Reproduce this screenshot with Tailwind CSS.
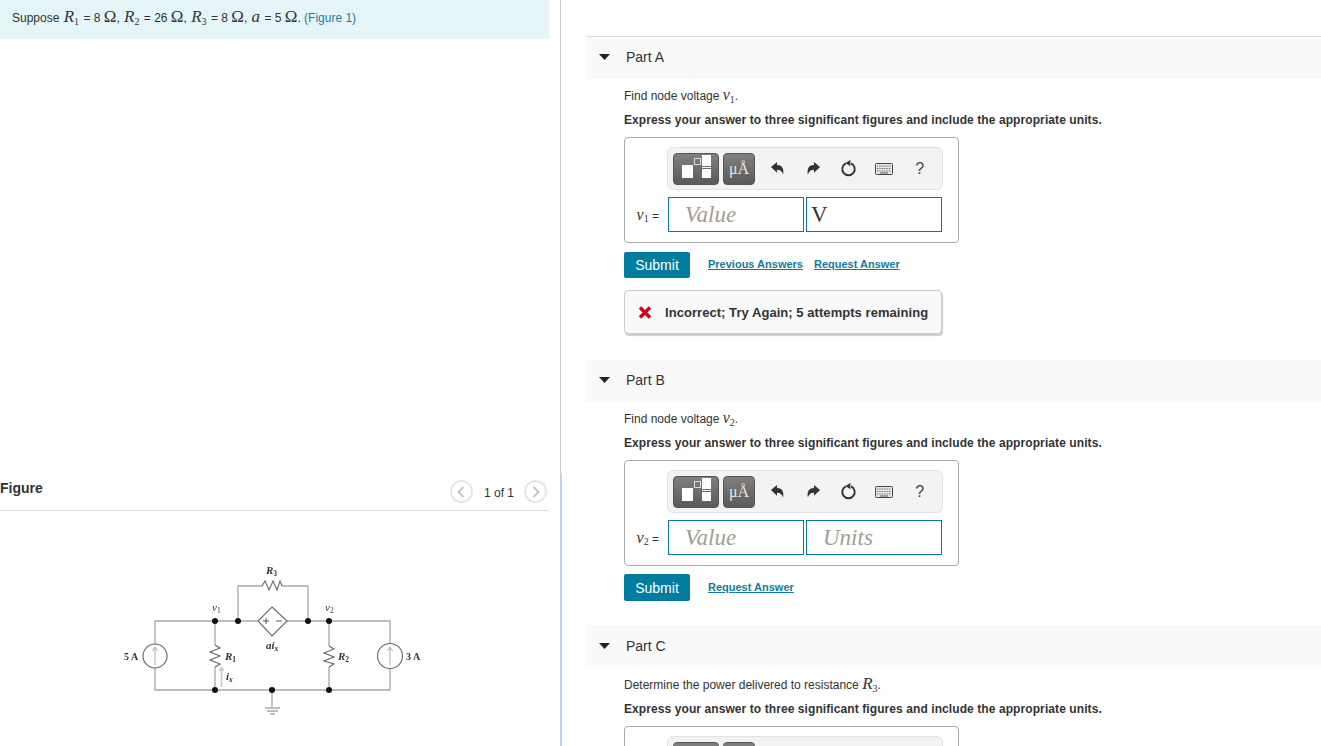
<!DOCTYPE html>
<html lang="en">
<head>
    <meta charset="UTF-8">
    <meta name="viewport" content="width=device-width, initial-scale=1.0">
    <title>Node voltages</title>
    <script src="https://cdn.jsdelivr.net/npm/@tailwindcss/browser@4"></script>
</head>
<body class="bg-white font-['Liberation_Sans',sans-serif] text-[#333]">
    <!-- shared toolbar icons -->
    <svg class="hidden">
        <symbol id="undo" viewBox="0 0 16 16"><path d="M1 6.500 7.500 1v3.300c4.800 0 7.800 3.200 6.500 10.200-1-3.700-3-5.300-6.500-5.300V12.500Z" fill="#333"/></symbol>
        <symbol id="redo" viewBox="0 0 16 16"><path d="M15 6.500 8.500 1v3.300C3.700 4.300.7 7.500 2 14.500c1-3.700 3-5.300 6.500-5.300V12.500Z" fill="#333"/></symbol>
        <symbol id="refresh" viewBox="0 0 18 18"><path d="M11.800 3.600a6.600 6.600 0 1 1-5.600 0" fill="none" stroke="#333" stroke-width="2"/><path d="M11 0v6.500L5.800 3.300Z" fill="#333"/></symbol>
        <symbol id="keyboard" viewBox="0 0 18 12"><rect x=".5" y=".5" width="17" height="11" rx="1" fill="#e8e8e8" stroke="#444"/><path d="M2 3h14M2 5.500h14M2 8h14" stroke="#666" stroke-width="1.200" stroke-dasharray="1 .7"/><path d="M5 10h8" stroke="#555"/></symbol>
    </svg>

    <div class="flex h-[746px] w-[1321px] overflow-hidden">
        <!-- Left pane -->
        <div class="w-[549px] shrink-0">
            <div class="flex h-[39px] items-center bg-[#e5f5f7] pb-1 pl-3 text-xs">
                <span>Suppose <i class="mx-px font-['Liberation_Serif'] text-[17px]">R<sub class="not-italic text-[10px]">1</sub></i> = 8 <span class="font-['Liberation_Serif'] text-[17px]">Ω</span>, <i class="mx-px font-['Liberation_Serif'] text-[17px]">R<sub class="not-italic text-[10px]">2</sub></i> = 26 <span class="font-['Liberation_Serif'] text-[17px]">Ω</span>, <i class="mx-px font-['Liberation_Serif'] text-[17px]">R<sub class="not-italic text-[10px]">3</sub></i> = 8 <span class="font-['Liberation_Serif'] text-[17px]">Ω</span>, <i class="mx-px font-['Liberation_Serif'] text-[17px]">a</i> = 5 <span class="font-['Liberation_Serif'] text-[17px]">Ω</span>. <a href="#" class="text-[#1a7f9c]">(Figure 1)</a></span>
            </div>

            <div class="mt-[439px] flex h-[33px] w-[548px] items-center justify-between border-b border-[#ddd] pb-[5px]">
                <h3 class="-mt-[7px] text-sm font-bold">Figure</h3>
                <div class="flex items-center">
                    <span class="flex h-[23px] w-[23px] items-center justify-center rounded-full border-2 border-[#e6e6e6]">
                        <svg width="8" height="12" viewBox="0 0 8 12"><path d="M6.500 1 1.500 6l5 5" fill="none" stroke="#c4c4c4" stroke-width="2"/></svg>
                    </span>
                    <span class="ml-[11px] mr-[10px] mt-[3px] text-xs">1 of 1</span>
                    <span class="mr-px flex h-[23px] w-[23px] items-center justify-center rounded-full border-2 border-[#e6e6e6]">
                        <svg width="8" height="12" viewBox="0 0 8 12"><path d="M1.500 1 6.500 6l-5 5" fill="none" stroke="#c4c4c4" stroke-width="2"/></svg>
                    </span>
                </div>
            </div>

            <!-- circuit, coordinates match the page so y starts at 511 -->
            <svg class="block blur-[0.4px]" width="549" height="235" viewBox="0 511 549 235" font-family="Liberation Serif" fill="#333">
                <g fill="none" stroke="#a8a8a8" stroke-width="1.300">
                    <path d="M258 621H155V644M155 668V690H390V669M390 644V621H287"/>
                    <path d="M215 621V645M215 667V690M329 621V646M329 667V690"/>
                    <path d="M238 621V586H262M282 586H308V621"/>
                    <path d="M272 690V707"/>
                    <path d="M265 708H280M267 711H278M270 714H275"/>
                </g>
                <g fill="none" stroke="#666" stroke-width="1.100">
                    <circle cx="155" cy="656" r="12"/>
                    <circle cx="390" cy="656" r="12.500"/>
                    <path d="M272 607 287 621 272 636 258 621Z"/>
                    <path d="M215 645 220 648 210 652 220 656 210 660 220 664 215 667"/>
                    <path d="M329 646 334 649 324 653 334 657 324 661 334 664 329 667"/>
                    <path d="M262 586 265 581 269 590 273 581 277 590 280 581 282 586"/>
                </g>
                <g fill="none" stroke="#aaa">
                    <path d="M155 665V648M152.500 651 155 647 157.500 651"/>
                    <path d="M390 665V648M387.500 651 390 647 392.500 651"/>
                </g>
                <path d="M221.500 687V669" stroke="#ccc" stroke-width="1.800"/>
                <path d="M218.500 671 221.500 666 224.500 671Z" fill="#ccc"/>
                <path d="M263 621H269M266 618V624M276 621H282" stroke="#555"/>
                <g fill="#111">
                    <circle cx="215" cy="621" r="3"/>
                    <circle cx="238" cy="621" r="3"/>
                    <circle cx="308" cy="621" r="3"/>
                    <circle cx="329" cy="621" r="3"/>
                    <circle cx="215" cy="690" r="3"/>
                    <circle cx="272" cy="690" r="3"/>
                    <circle cx="329" cy="690" r="3"/>
                </g>
                <g font-size="11">
                    <text x="124" y="660" font-weight="700" font-size="10">5 A</text>
                    <text x="406" y="660" font-weight="700" font-size="10">3 A</text>
                    <text x="225" y="660" font-style="italic" font-weight="700">R<tspan font-size="7.500" dy="2" font-style="normal">1</tspan></text>
                    <text x="338" y="660" font-style="italic" font-weight="700">R<tspan font-size="7.500" dy="2" font-style="normal">2</tspan></text>
                    <text x="266" y="574" font-style="italic" font-weight="700">R<tspan font-size="7.500" dy="2" font-style="normal">3</tspan></text>
                    <text x="226" y="680" font-style="italic" font-weight="700">i<tspan font-size="7.500" dy="2">x</tspan></text>
                    <text x="266" y="649" font-style="italic" font-weight="700">ai<tspan font-size="7.500" dy="2">x</tspan></text>
                    <text x="212" y="611" font-style="italic">v<tspan font-size="7.500" dy="2" font-style="normal">1</tspan></text>
                    <text x="325" y="611" font-style="italic">v<tspan font-size="7.500" dy="2" font-style="normal">2</tspan></text>
                </g>
            </svg>
        </div>

        <!-- Pane divider -->
        <div class="ml-[11px] flex w-[2px] shrink-0 flex-col">
            <div class="h-[473px] w-px bg-[#ccc]"></div>
            <div class="flex-1 bg-[#c3d4e8]"></div>
        </div>

        <!-- Right pane -->
        <div class="ml-6 flex-1 pt-9">
            <!-- Part A -->
            <div class="flex h-[43px] items-center border-t border-[#ddd] bg-[#f9f9f9] pb-[2px] pl-[13px] text-sm">
                <svg width="11" height="6" viewBox="0 0 11 6"><path d="M0 0H11L5.500 6Z" fill="#222"/></svg>
                <span class="ml-4">Part A</span>
            </div>
            <div class="pl-[38px]">
                <p class="mt-1 h-4 text-xs leading-4">Find node voltage <i class="font-['Liberation_Serif'] text-base">v<sub class="not-italic text-[10px]">1</sub></i>.</p>
                <p class="mt-[13px] h-4 text-xs font-bold leading-4 tracking-[0.085px]">Express your answer to three significant figures and include the appropriate units.</p>
                <div class="mt-[9px] h-[106px] w-[335px] rounded border border-[#aaa] pt-[9px]">
                    <div class="ml-[42px] flex h-[43px] w-[276px] items-center rounded-md border border-[#e2e2e2] bg-[#f3f3f3] pl-[5px]">
                        <button class="flex h-8 w-[46px] items-center justify-center gap-px rounded border border-[#555] bg-linear-to-b from-[#808080] to-[#5a5a5a]">
                            <span class="mt-[5px] h-[13px] w-[11px] bg-white"></span>
                            <span class="mb-[15px] h-[7px] w-[7px] border border-[#ddd]"></span>
                            <span class="mb-1 flex flex-col gap-px"><span class="h-[11px] w-[9px] bg-white"></span><span class="h-px w-[9px] bg-white"></span><span class="h-[9px] w-[9px] bg-white"></span></span>
                        </button>
                        <button class="ml-1 h-8 w-8 rounded border border-[#555] bg-linear-to-b from-[#808080] to-[#5a5a5a] font-['Liberation_Serif'] text-base text-[#e6e6e6]">μÅ</button>
                        <div class="ml-[5px] flex items-center">
                            <span class="flex w-[35.5px] justify-center"><svg width="15" height="15"><use href="#undo"/></svg></span>
                            <span class="flex w-[35.5px] justify-center"><svg width="15" height="15"><use href="#redo"/></svg></span>
                            <span class="flex w-[35.5px] justify-center"><svg width="17" height="17"><use href="#refresh"/></svg></span>
                            <span class="flex w-[35.5px] justify-center"><svg width="18" height="12"><use href="#keyboard"/></svg></span>
                            <span class="flex w-[35.5px] justify-center text-base text-[#444]">?</span>
                        </div>
                    </div>
                    <div class="mt-[7px] flex h-[35px]">
                        <label class="w-[43px] self-center pr-[9px] text-right text-xs"><i class="font-['Liberation_Serif'] text-base">v<sub class="not-italic text-[10px]">1</sub></i> =</label>
                        <input class="h-[35px] w-[136px] border border-[#0b7a99] pl-4 font-['Liberation_Serif'] text-[23px] italic placeholder:text-[#a39d96]" placeholder="Value">
                        <input class="ml-[2px] h-[35px] w-[136px] border border-[#0b7a99] pl-1 font-['Liberation_Serif'] text-[23px]" value="V">
                    </div>
                </div>
                <div class="mt-[9px] flex items-center">
                    <button class="h-[26px] w-[66px] rounded-[2px] bg-[#007c9e] text-sm text-white">Submit</button>
                    <a href="#" class="ml-[18px] -mt-px text-[11px] font-bold text-[#0f7c9e] underline">Previous Answers</a>
                    <a href="#" class="ml-[11px] -mt-px text-[11px] font-bold text-[#0f7c9e] underline">Request Answer</a>
                </div>
                <div class="mt-3 flex h-11 w-[318px] items-center rounded border border-[#ccc] bg-[#f9f9f9] pl-[13px] shadow-[1px_2px_1px_#ccc]">
                    <svg width="14" height="13" viewBox="0 0 14 13"><path d="M2 1.500 12 11.500M12 1.500 2 11.500" stroke="#d0021b" stroke-width="3.400"/></svg>
                    <span class="ml-[13px] mt-px text-[13px] font-bold tracking-[0.05px]">Incorrect; Try Again; 5 attempts remaining</span>
                </div>
            </div>

            <!-- Part B -->
            <div class="mt-[26px] flex h-[42px] items-center bg-[#f9f9f9] pb-[2px] pl-[13px] text-sm">
                <svg width="11" height="6" viewBox="0 0 11 6"><path d="M0 0H11L5.500 6Z" fill="#222"/></svg>
                <span class="ml-4">Part B</span>
            </div>
            <div class="pl-[38px]">
                <p class="mt-1 h-4 text-xs leading-4">Find node voltage <i class="font-['Liberation_Serif'] text-base">v<sub class="not-italic text-[10px]">2</sub></i>.</p>
                <p class="mt-[13px] h-4 text-xs font-bold leading-4 tracking-[0.085px]">Express your answer to three significant figures and include the appropriate units.</p>
                <div class="mt-[9px] h-[106px] w-[335px] rounded border border-[#aaa] pt-[9px]">
                    <div class="ml-[42px] flex h-[43px] w-[276px] items-center rounded-md border border-[#e2e2e2] bg-[#f3f3f3] pl-[5px]">
                        <button class="flex h-8 w-[46px] items-center justify-center gap-px rounded border border-[#555] bg-linear-to-b from-[#808080] to-[#5a5a5a]">
                            <span class="mt-[5px] h-[13px] w-[11px] bg-white"></span>
                            <span class="mb-[15px] h-[7px] w-[7px] border border-[#ddd]"></span>
                            <span class="mb-1 flex flex-col gap-px"><span class="h-[11px] w-[9px] bg-white"></span><span class="h-px w-[9px] bg-white"></span><span class="h-[9px] w-[9px] bg-white"></span></span>
                        </button>
                        <button class="ml-1 h-8 w-8 rounded border border-[#555] bg-linear-to-b from-[#808080] to-[#5a5a5a] font-['Liberation_Serif'] text-base text-[#e6e6e6]">μÅ</button>
                        <div class="ml-[5px] flex items-center">
                            <span class="flex w-[35.5px] justify-center"><svg width="15" height="15"><use href="#undo"/></svg></span>
                            <span class="flex w-[35.5px] justify-center"><svg width="15" height="15"><use href="#redo"/></svg></span>
                            <span class="flex w-[35.5px] justify-center"><svg width="17" height="17"><use href="#refresh"/></svg></span>
                            <span class="flex w-[35.5px] justify-center"><svg width="18" height="12"><use href="#keyboard"/></svg></span>
                            <span class="flex w-[35.5px] justify-center text-base text-[#444]">?</span>
                        </div>
                    </div>
                    <div class="mt-[7px] flex h-[35px]">
                        <label class="w-[43px] self-center pr-[9px] text-right text-xs"><i class="font-['Liberation_Serif'] text-base">v<sub class="not-italic text-[10px]">2</sub></i> =</label>
                        <input class="h-[35px] w-[136px] border border-[#0b7a99] pl-4 font-['Liberation_Serif'] text-[23px] italic placeholder:text-[#a39d96]" placeholder="Value">
                        <input class="ml-[2px] h-[35px] w-[136px] border border-[#0b7a99] pl-4 font-['Liberation_Serif'] text-[23px] italic placeholder:text-[#a39d96]" placeholder="Units">
                    </div>
                </div>
                <div class="mt-2 flex items-center">
                    <button class="h-[27px] w-[66px] rounded-[2px] bg-[#007c9e] text-sm text-white">Submit</button>
                    <a href="#" class="ml-[18px] text-[11px] font-bold text-[#0f7c9e] underline">Request Answer</a>
                </div>
            </div>

            <!-- Part C -->
            <div class="mt-6 flex h-[42px] items-center bg-[#f9f9f9] pl-[13px] text-sm">
                <svg width="11" height="6" viewBox="0 0 11 6"><path d="M0 0H11L5.500 6Z" fill="#222"/></svg>
                <span class="ml-4">Part C</span>
            </div>
            <div class="pl-[38px]">
                <p class="mt-[9px] h-4 text-xs leading-4">Determine the power delivered to resistance <i class="font-['Liberation_Serif'] text-[17px]">R<sub class="not-italic text-[10px]">3</sub></i>.</p>
                <p class="mt-[9px] h-4 text-xs font-bold leading-4 tracking-[0.085px]">Express your answer to three significant figures and include the appropriate units.</p>
                <div class="mt-[9px] h-[106px] w-[335px] rounded border border-[#aaa] pt-[9px]">
                    <div class="ml-[42px] flex h-[43px] w-[276px] items-center rounded-md border border-[#e2e2e2] bg-[#f3f3f3] pl-[5px]">
                        <button class="h-8 w-[46px] rounded border border-[#555] bg-linear-to-b from-[#808080] to-[#5a5a5a]"></button>
                        <button class="ml-1 h-8 w-8 rounded border border-[#555] bg-linear-to-b from-[#808080] to-[#5a5a5a]"></button>
                    </div>
                </div>
            </div>
        </div>
    </div>
</body>
</html>
